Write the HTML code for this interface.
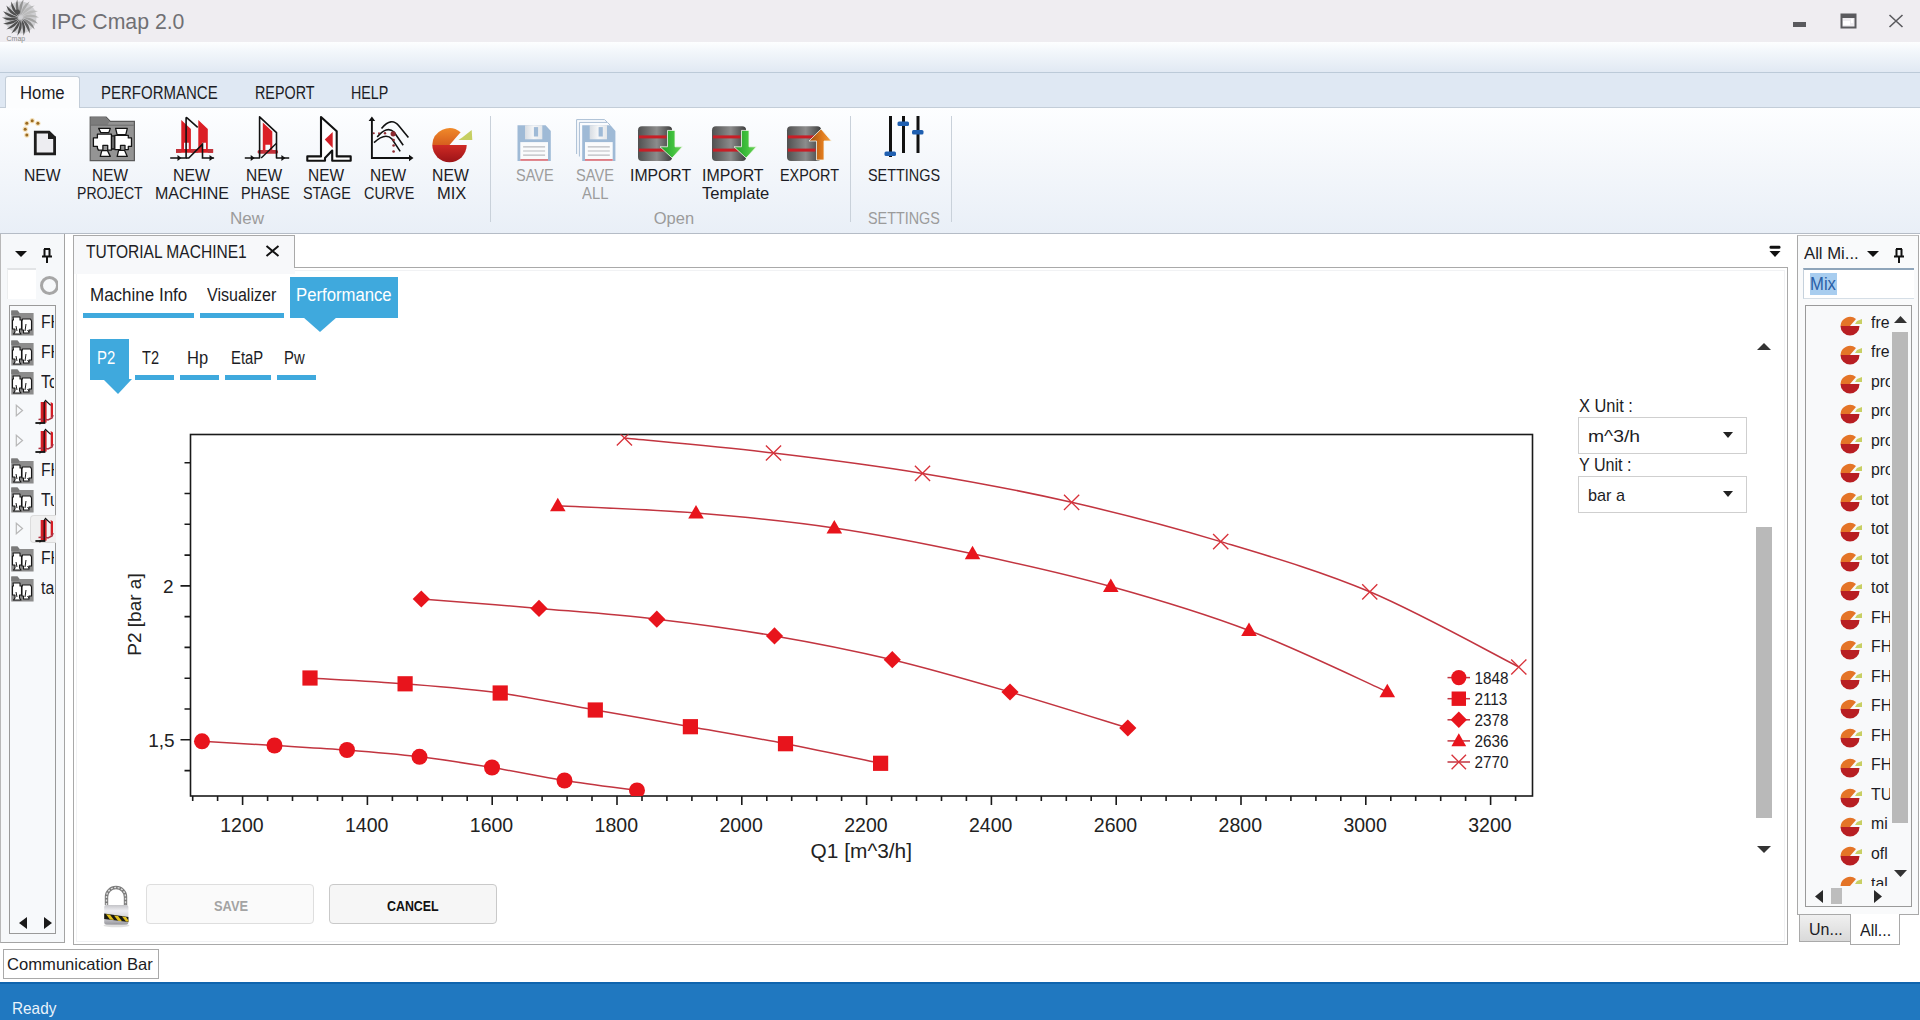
<!DOCTYPE html>
<html><head><meta charset="utf-8"><title>IPC Cmap 2.0</title>
<style>
*{box-sizing:border-box}
html,body{margin:0;padding:0}
body{width:1920px;height:1020px;position:relative;overflow:hidden;background:#fff;font-family:"Liberation Sans",sans-serif;color:#1f1f1f}
.a{position:absolute}
.t{position:absolute;white-space:nowrap;line-height:1;transform-origin:0 0}
#titlebar{left:0;top:0;width:1920px;height:42px;background:#efedf1}
#band{left:0;top:42px;width:1920px;height:31px;background:linear-gradient(#fdfeff 0%,#f3f7fb 30%,#e1e9f3 100%);border-bottom:1px solid #bccad8}
#tabstrip{left:0;top:73px;width:1920px;height:34px;background:#dfe8f3}
#hometab{left:5px;top:76px;width:75px;height:32px;background:#fcfdfe;border:1px solid #c3cdd8;border-bottom:none;border-radius:3px 3px 0 0}
#ribbon{left:0;top:107px;width:1920px;height:127px;background:linear-gradient(#fdfeff 0%,#f4f7fb 45%,#e9eff7 100%);border-top:1px solid #c3cdd8;border-bottom:1px solid #b5bcc6}
.rl{position:absolute;font-size:16px;line-height:18px;text-align:center;color:#1c1c24;white-space:nowrap;transform:scaleX(.92);transform-origin:50% 0}
.rl.dis{color:#9a9a9a}
.gl{position:absolute;font-size:16px;line-height:1;color:#9b9b9b;white-space:nowrap;transform:scaleX(.92);transform-origin:50% 0}
.sep{position:absolute;width:1px;background:#c9d1da}
#status{left:0;top:982px;width:1920px;height:38px;background:#2078c0;border-top:2px solid #0f64ae}
</style></head>
<body>
<div id="titlebar" class="a"></div>
<div id="band" class="a"></div>
<div id="tabstrip" class="a"></div>
<div id="ribbon" class="a"></div>
<div id="hometab" class="a"></div>
<svg class="a" style="left:0px;top:0px" width="44" height="44" viewBox="0 0 44 44">
<circle cx="20.5" cy="17.5" r="16" fill="#cfcfd2"/>
<path d="M22.5,17.5 Q32.4,16.0 37.9,23.8 Q31.8,21.4 22.5,17.5 Z" fill="#a1a1a1"/><path d="M22.4,18.2 Q32.2,20.2 34.7,29.4 Q29.8,25.1 22.4,18.2 Z" fill="#858585"/><path d="M22.0,18.8 Q30.6,24.0 29.8,33.5 Q26.7,27.8 22.0,18.8 Z" fill="#5d5d5d"/><path d="M21.5,19.2 Q27.7,27.1 23.7,35.7 Q22.8,29.3 21.5,19.2 Z" fill="#4e4e4e"/><path d="M20.8,19.5 Q24.0,29.0 17.3,35.7 Q18.6,29.4 20.8,19.5 Z" fill="#4e4e4e"/><path d="M20.2,19.5 Q19.9,29.5 11.3,33.5 Q14.7,28.0 20.2,19.5 Z" fill="#4e4e4e"/><path d="M19.5,19.2 Q15.8,28.5 6.3,29.4 Q11.4,25.4 19.5,19.2 Z" fill="#4e4e4e"/><path d="M19.0,18.8 Q12.3,26.3 3.1,23.8 Q9.3,21.8 19.0,18.8 Z" fill="#4e4e4e"/><path d="M18.6,18.2 Q9.8,22.9 2.0,17.5 Q8.5,17.7 18.6,18.2 Z" fill="#4e4e4e"/><path d="M18.5,17.5 Q8.6,19.0 3.1,11.2 Q9.2,13.6 18.5,17.5 Z" fill="#4e4e4e"/><path d="M18.6,16.8 Q8.8,14.8 6.3,5.6 Q11.2,9.9 18.6,16.8 Z" fill="#4e4e4e"/><path d="M19.0,16.2 Q10.4,11.0 11.2,1.5 Q14.3,7.2 19.0,16.2 Z" fill="#4e4e4e"/><path d="M19.5,15.8 Q13.3,7.9 17.3,-0.7 Q18.2,5.7 19.5,15.8 Z" fill="#737373"/><path d="M20.2,15.5 Q17.0,6.0 23.7,-0.7 Q22.4,5.6 20.2,15.5 Z" fill="#949494"/><path d="M20.8,15.5 Q21.1,5.5 29.7,1.5 Q26.3,7.0 20.8,15.5 Z" fill="#ababab"/><path d="M21.5,15.8 Q25.2,6.5 34.7,5.6 Q29.6,9.6 21.5,15.8 Z" fill="#b8b8b8"/><path d="M22.0,16.2 Q28.7,8.7 37.9,11.2 Q31.7,13.2 22.0,16.2 Z" fill="#bbbbbb"/><path d="M22.4,16.8 Q31.2,12.1 39.0,17.5 Q32.5,17.3 22.4,16.8 Z" fill="#b3b3b3"/>
<circle cx="17.5" cy="12" r="2.5" fill="#505050"/>
<text x="6.5" y="40.5" font-size="7" fill="#8a8a8a" font-family="Liberation Sans">Cmap</text>
</svg>
<div class="t" style="left:51.32px;top:10.84px;font-size:22px;color:#707074;transform:scaleX(0.9656)">IPC Cmap 2.0</div>
<div class="a" style="left:1793px;top:22px;width:13px;height:5px;background:#5a5a5e"></div>
<svg class="a" style="left:1840px;top:13px" width="17" height="16" viewBox="0 0 17 16">
<rect x="1.5" y="1.5" width="14" height="13" fill="none" stroke="#5a5a5e" stroke-width="2"/>
<rect x="1" y="1" width="15" height="4" fill="#5a5a5e"/>
<rect x="3" y="8" width="7" height="4" fill="#fff"/>
<rect x="11" y="6" width="2" height="4" fill="#fff"/>
</svg>
<svg class="a" style="left:1888px;top:14px" width="16" height="14" viewBox="0 0 16 14">
<path d="M1.5,1 L14.5,13 M14.5,1 L1.5,13" stroke="#5a5a5e" stroke-width="1.6"/>
</svg>
<div class="t" style="left:19.77px;top:84.24px;font-size:18px;color:#1c1c24;transform:scaleX(0.9297)">Home</div>
<div class="t" style="left:100.67px;top:84.24px;font-size:18px;color:#1c1c24;transform:scaleX(0.8331)">PERFORMANCE</div>
<div class="t" style="left:255.45px;top:84.24px;font-size:18px;color:#1c1c24;transform:scaleX(0.7973)">REPORT</div>
<div class="t" style="left:351.21px;top:84.24px;font-size:18px;color:#1c1c24;transform:scaleX(0.7932)">HELP</div>

<!-- NEW -->
<svg class="a" style="left:16px;top:112px" width="48" height="48" viewBox="0 0 48 48">
<g fill="#f3d9a6" opacity=".8"><circle cx="10.8" cy="11.3" r="2.6"/><circle cx="16.2" cy="8.7" r="2.6"/><circle cx="21.9" cy="11.3" r="2.6"/><circle cx="9.2" cy="17.2" r="2.6"/><circle cx="10.8" cy="23.1" r="2.6"/></g>
<g fill="#9a6a22"><circle cx="10.8" cy="11.3" r="1.5"/><circle cx="16.2" cy="8.7" r="1.5"/><circle cx="21.9" cy="11.3" r="1.5"/><circle cx="9.2" cy="17.2" r="1.5"/><circle cx="10.8" cy="23.1" r="1.5"/></g>
<path d="M19.3,20.2 L33,20.2 L38.6,25.6 L38.6,41.9 L19.3,41.9 Z" fill="#ededf1" stroke="#1e1e1e" stroke-width="2.8"/>
<path d="M32,19 L34,19 L34,22 L36.5,22 L36.5,24.5 L40,24.5 L40,27 L32,27 Z" fill="#1e1e1e"/>
</svg>
<!-- NEW PROJECT -->
<svg class="a" style="left:86px;top:112px" width="54" height="54" viewBox="0 0 54 54">
<path d="M4.2,5 L20.1,5 L24.3,9.3 L48.4,9.3 L48.4,48.7 L4.2,48.7 Z" fill="#949494" stroke="#5a5a5a" stroke-width="1.2"/>
<path d="M4.8,5.6 L19.8,5.6 L23.5,9.6 L21.5,13 L4.8,13 Z" fill="#7c7c7c"/>
<path d="M4.8,13.2 H47.8" stroke="#6a6a6a" stroke-width="1"/>
<g fill="#fff" stroke="#141414" stroke-width="1.3" stroke-linejoin="round">
<path d="M12.7,16.4 H24.3 L22.8,20.6 H14.8 Z"/>
<path d="M11.4,22.2 H25.4 V38.1 H21.7 V33.3 H16.9 V38.1 H12.4 L11.4,36 V34.4 H7.4 V25.9 H11.4 Z"/>
<path d="M15.8,38.6 H21.5 L24.3,44.4 H14.3 Z"/>
<path d="M26,23.8 H28 V37 H26 Z"/>
<path d="M29.6,16.4 H41.3 L39.8,22.6 H31.1 Z"/>
<path d="M28.8,23.3 H42.3 V25.9 H45.5 V34.4 H42.3 V37.6 H39 V33.3 H34.5 V37.6 H28.8 Z"/>
<path d="M32.6,38.4 H38.6 L41.3,44.4 H31.2 Z"/>
</g>
</svg>
<!-- NEW MACHINE -->
<svg class="a" style="left:166px;top:112px" width="54" height="54" viewBox="0 0 54 54">
<path d="M10,37 H15.3 V7.9 L24.9,16.9 V37 H32.3 V7.9 L41.8,16.9 V37 H47.1 V40.7 H10 Z" fill="#db1f26"/>
<path d="M15.3,37 V40.7 H10 V37 Z M41.8,37 H47.1 V40.7 H41.8 Z M24.9,37 H32.3 V40.7 H24.9 Z" fill="#c0323a"/>
<path d="M18,30.7 H22.8 V37 H18 Z M36,30.7 H40 V37 H36 Z" fill="#f5f7fb"/>
<path d="M4.2,46 H20.1 V6 Q20.1,5 21,5.8 L31.7,15.3" fill="none" stroke="#111" stroke-width="1.6"/>
<path d="M20.1,46 H22.8 L36.5,32.3 V46 H48.1" fill="none" stroke="#111" stroke-width="1.6"/>
<path d="M11.5,43 L15.5,46 L11.5,49 Z M43.5,43 L47.5,46 L43.5,49 Z" fill="#111"/>
</svg>
<!-- NEW PHASE -->
<svg class="a" style="left:240px;top:112px" width="54" height="54" viewBox="0 0 54 54">
<path d="M22.8,10.6 L32.3,19.6 V40.2 H30.2 V32.8 H25.4 V40.2 H22.8 Z" fill="#db1f26"/>
<rect x="17.5" y="38.1" width="20.6" height="3.7" rx="1.8" fill="#c2303a"/>
<path d="M4.8,46 H19.6 V4.8 L36.5,20.6 V46 H49.2" fill="none" stroke="#111" stroke-width="1.6" stroke-linejoin="round"/>
<path d="M21.2,46 L36.5,31.2" fill="none" stroke="#111" stroke-width="1.4"/>
<path d="M10.7,43 L14.7,46 L10.7,49 Z M41.4,43 L45.4,46 L41.4,49 Z" fill="#111"/>
</svg>
<!-- NEW STAGE -->
<svg class="a" style="left:302px;top:112px" width="54" height="54" viewBox="0 0 54 54">
<path d="M5.3,44.4 H19 V5 L34.7,19.3 V44.4 H48.7 V48.7 H30.2 V38.6 L23,46 V48.7 H5.3 Z" fill="#fff" stroke="#111" stroke-width="2.1" stroke-linejoin="round"/>
<path d="M30.7,20.1 L22.8,27.5 L30.7,36 Z" fill="#d31f27"/>
</svg>
<!-- NEW CURVE -->
<svg class="a" style="left:364px;top:112px" width="54" height="54" viewBox="0 0 54 54">
<path d="M7.9,7 V46 H46" fill="none" stroke="#111" stroke-width="1.9"/>
<path d="M4.6,9 L7.9,4.6 L11.2,9 Z M45,42.8 L49.5,46 L45,49.2 Z" fill="#111"/>
<path d="M17.5,16.4 Q27.5,4.5 35,14 L44.4,25.4" fill="none" stroke="#111" stroke-width="1.6"/>
<path d="M13.2,24.9 Q22.8,13.5 30,20 L39.2,33.3" fill="none" stroke="#111" stroke-width="1.6"/>
<path d="M10,30.7 Q21.2,20 28,27 L36.2,39.4" fill="none" stroke="#111" stroke-width="1.6"/>
<g fill="#8e2a30"><circle cx="9.8" cy="21.2" r="1"/><circle cx="15" cy="21.2" r="1"/><circle cx="21" cy="21.2" r="1.2"/><circle cx="29.2" cy="21.8" r="2.6"/><circle cx="29.6" cy="28" r="1.3"/><circle cx="29.6" cy="33.5" r="1.3"/><circle cx="29.6" cy="39.5" r="1.3"/></g>
</svg>
<!-- NEW MIX -->
<svg class="a" style="left:428px;top:112px" width="54" height="54" viewBox="0 0 54 54">
<defs><linearGradient id="mxo" x1="0" x2="0" y1="0" y2="1"><stop offset="0" stop-color="#f08a2a"/><stop offset="1" stop-color="#d75e1e"/></linearGradient>
<linearGradient id="mxr" x1="0" x2="0" y1="0" y2="1"><stop offset="0" stop-color="#cf2a24"/><stop offset="1" stop-color="#9c1418"/></linearGradient></defs>
<path d="M21.5,33 L32.6,20.2 A17.2,17.2 0 0 0 4.3,33 Z" fill="url(#mxo)"/>
<path d="M4.3,33 A17.2,17.2 0 0 0 38.7,33 Z" fill="url(#mxr)"/>
<path d="M34.2,25.4 L43.7,18 L44.3,28 L30.4,28 Z" fill="#c6cf62"/>
</svg>
<!-- separators -->
<div class="sep" style="left:490px;top:116px;height:106px"></div>
<div class="sep" style="left:850px;top:116px;height:106px"></div>
<div class="sep" style="left:951px;top:116px;height:106px"></div>
<!-- SAVE -->
<svg class="a" style="left:510px;top:114px" width="46" height="50" viewBox="0 0 46 50">
<defs><linearGradient id="shut" x1="0" x2="1"><stop offset="0" stop-color="#d8dde3"/><stop offset=".5" stop-color="#f6f7f8"/><stop offset="1" stop-color="#e4e7ea"/></linearGradient></defs>
<path d="M7.5,11.2 H35.6 L40.8,16.9 V46.9 H7.5 Z" fill="#9fbad6"/>
<rect x="15" y="11.2" width="17.3" height="14.1" fill="url(#shut)"/>
<rect x="23.9" y="13.1" width="4.2" height="9.4" fill="#9fbad6"/>
<rect x="10.3" y="28.1" width="27.7" height="18.8" fill="#fafbfc"/>
<path d="M13.1,32.8 H35.1 M13.1,37 H35.1 M13.1,41.2 H35.1" stroke="#b9bcc0" stroke-width="1.2"/>
<rect x="10.3" y="45" width="27.7" height="1.9" fill="#de7d84"/>
</svg>
<!-- SAVE ALL -->
<svg class="a" style="left:576px;top:114px" width="116" height="50" viewBox="66 0 116 50">
<path d="M66.6,40 V5.6 H94.5 L97,8" fill="none" stroke="#a9bed4" stroke-width="1"/>
<path d="M69.4,42.5 V8.4 H97.5 L100,11" fill="none" stroke="#a9bed4" stroke-width="1"/>
<path d="M72.2,11.2 H100.5 L105.4,16.9 V46.9 H72.2 Z" fill="#9fbad6"/>
<rect x="79.7" y="11.2" width="17.3" height="14.1" fill="url(#shut)"/>
<rect x="88.6" y="13.1" width="4.2" height="9.4" fill="#9fbad6"/>
<rect x="75" y="28.1" width="27.7" height="18.8" fill="#fafbfc"/>
<path d="M77.8,32.8 H99.8 M77.8,37 H99.8 M77.8,41.2 H99.8" stroke="#b9bcc0" stroke-width="1.2"/>
<rect x="75" y="45" width="27.7" height="1.9" fill="#de7d84"/>
</svg>
<!-- IMPORT -->
<svg class="a" style="left:510px;top:114px" width="50" height="50" viewBox="0 0 50 50" overflow="visible">
<defs><linearGradient id="db" x1="0" x2="1" y1="0" y2="0"><stop offset="0" stop-color="#505050"/><stop offset=".55" stop-color="#8c8c8c"/><stop offset="1" stop-color="#3e3e3e"/></linearGradient>
<linearGradient id="ga" x1="0" x2="1"><stop offset="0" stop-color="#1f9a2a"/><stop offset=".6" stop-color="#42c23e"/><stop offset="1" stop-color="#6fd35a"/></linearGradient>
<linearGradient id="oa" x1="0" x2="1"><stop offset="0" stop-color="#9a4a0c"/><stop offset=".6" stop-color="#e07b1e"/><stop offset="1" stop-color="#f5a040"/></linearGradient>
<g id="dbk"><rect x="128" y="12.2" width="34.1" height="34.7" rx="4" fill="url(#db)"/>
<rect x="128.9" y="21.4" width="27.6" height="3" fill="#c81e26"/><rect x="128.9" y="34.6" width="27.6" height="3" fill="#c81e26"/></g></defs>
<use href="#dbk"/>
<path d="M157.5,16.4 H165 V32.8 H172.4 L162.1,44 L150,32.8 H157.5 Z" fill="url(#ga)" stroke="#f4f8f0" stroke-width=".8"/>
<use href="#dbk" transform="translate(74,0)"/>
<path d="M231.5,16.4 H239 V32.8 H246.4 L236.1,44 L224,32.8 H231.5 Z" fill="url(#ga)" stroke="#f4f8f0" stroke-width=".8"/>
<use href="#dbk" transform="translate(149,0)"/>
<path d="M306.5,46 H314 V27 H321.4 L311.1,15 L299,27 H306.5 Z" fill="url(#oa)" stroke="#f4f8f0" stroke-width=".8"/>
</svg>
<!-- SETTINGS -->
<svg class="a" style="left:880px;top:112px" width="50" height="50" viewBox="0 0 50 50">
<path d="M10.5,4 V45 M23.5,4 V41 M38,4 V41" stroke="#111" stroke-width="3"/>
<rect x="4.5" y="39.5" width="11.5" height="4.5" rx="1.5" fill="#1f5fb0"/><rect x="17.5" y="9.5" width="11.5" height="4.5" rx="1.5" fill="#1f5fb0"/><rect x="32" y="18" width="11.5" height="4.5" rx="1.5" fill="#1f5fb0"/>
</svg>
<!-- labels -->
<div class="t" style="left:23.78px;top:166.58px;font-size:17px;color:#1c1c24;transform:scaleX(0.9245)">NEW</div><div class="t" style="left:91.69px;top:166.58px;font-size:17px;color:#1c1c24;transform:scaleX(0.9064)">NEW</div><div class="t" style="left:77.37px;top:184.58px;font-size:17px;color:#1c1c24;transform:scaleX(0.8274)">PROJECT</div><div class="t" style="left:172.57px;top:166.58px;font-size:17px;color:#1c1c24;transform:scaleX(0.9323)">NEW</div><div class="t" style="left:154.76px;top:184.58px;font-size:17px;color:#1c1c24;transform:scaleX(0.9435)">MACHINE</div><div class="t" style="left:245.79px;top:166.58px;font-size:17px;color:#1c1c24;transform:scaleX(0.9141)">NEW</div><div class="t" style="left:240.65px;top:184.58px;font-size:17px;color:#1c1c24;transform:scaleX(0.8473)">PHASE</div><div class="t" style="left:307.89px;top:166.58px;font-size:17px;color:#1c1c24;transform:scaleX(0.9115)">NEW</div><div class="t" style="left:302.9px;top:184.58px;font-size:17px;color:#1c1c24;transform:scaleX(0.8479)">STAGE</div><div class="t" style="left:369.69px;top:166.58px;font-size:17px;color:#1c1c24;transform:scaleX(0.9115)">NEW</div><div class="t" style="left:364.1px;top:184.58px;font-size:17px;color:#1c1c24;transform:scaleX(0.8511)">CURVE</div><div class="t" style="left:431.57px;top:166.58px;font-size:17px;color:#1c1c24;transform:scaleX(0.9271)">NEW</div><div class="t" style="left:437.33px;top:184.58px;font-size:17px;color:#1c1c24;transform:scaleX(0.9694)">MIX</div>
<div class="t" style="left:515.5px;top:166.58px;font-size:17px;color:#9c9c9c;transform:scaleX(0.8548)">SAVE</div><div class="t" style="left:575.6px;top:166.58px;font-size:17px;color:#9c9c9c;transform:scaleX(0.8593)">SAVE</div><div class="t" style="left:582.2px;top:184.58px;font-size:17px;color:#9c9c9c;transform:scaleX(0.8727)">ALL</div><div class="t" style="left:629.97px;top:166.58px;font-size:17px;color:#1c1c24;transform:scaleX(0.9283)">IMPORT</div><div class="t" style="left:701.76px;top:166.58px;font-size:17px;color:#1c1c24;transform:scaleX(0.9361)">IMPORT</div><div class="t" style="left:701.6px;top:184.78px;font-size:17px;color:#1c1c24;transform:scaleX(0.9748)">Template</div><div class="t" style="left:780.15px;top:166.58px;font-size:17px;color:#1c1c24;transform:scaleX(0.8474)">EXPORT</div><div class="t" style="left:867.9px;top:166.58px;font-size:17px;color:#1c1c24;transform:scaleX(0.848)">SETTINGS</div>
<div class="t" style="left:229.77px;top:210.21px;font-size:16.5px;color:#9b9b9b;transform:scaleX(1.0345)">New</div><div class="t" style="left:653.75px;top:210.21px;font-size:16.5px;color:#9b9b9b">Open</div><div class="t" style="left:867.9px;top:210.21px;font-size:16.5px;color:#9b9b9b;transform:scaleX(0.8703)">SETTINGS</div>

<!-- LEFT PANEL -->
<div class="a" style="left:0;top:234px;width:65px;height:709px;background:#f6f8fa;border:1px solid #a4a4a4;border-top:none;border-left:1px solid #b8b8b8"></div>
<svg class="a" style="left:14px;top:250px" width="14" height="8" viewBox="0 0 14 8"><path d="M1,1 L13,1 L7,7 Z" fill="#111"/></svg>
<svg class="a" style="left:41px;top:248px" width="12" height="16" viewBox="0 0 12 16"><path d="M3,1 H9 M3.5,1 V8 M8.5,1 V8 M1,8.5 H11 M6,9 V15" stroke="#111" stroke-width="2" fill="none"/></svg>
<div class="a" style="left:7px;top:268px;width:29px;height:31px;background:#fff;border-top:2px solid #e2e4e6;border-left:1px solid #eceeef"></div>
<div class="a" style="left:38px;top:273px;width:20px;height:24px;overflow:hidden"><div class="a" style="left:1.5px;top:2.5px;width:19px;height:19px;border-radius:50%;border:3.5px solid #a6a6a6"></div></div>
<div class="a" style="left:9px;top:305px;width:47px;height:629px;border:1px solid #9a9a9a;background:#f7f9fb"></div>
<svg class="a" style="left:10px;top:310px" width="24" height="26" viewBox="0 0 24 26">
<path d="M1.3,0.6 H7.5 L9.5,3 H23.6 V25.6 H1.3 Z" fill="#8c8c8c"/><path d="M1.3,0.6 H7.5 L9.5,3 L8.5,5 H1.3 Z" fill="#7a7a7a"/>
<g fill="#fff" stroke="#161616" stroke-width="1.1" stroke-linejoin="round">
<path d="M3,7 H10 V10 H11.5 V19 H9.5 V22 L11,24 H3.5 L5,22 V19 H2.5 V10 H3.5 Z"/>
<path d="M12.5,9 H20.5 L21.5,11 V20 H19 V23 H13.5 V20 H12 V11 Z"/>
</g>
<path d="M6,16 L7,21 M16,14 L15,21 M17.5,20 L19,22" stroke="#161616" stroke-width="1"/>
</svg>
<div class="a" style="left:40px;top:312px;width:13.5px;height:20px;overflow:hidden"><div class="t" style="left:0.6px;top:1.7px;font-size:17.5px;color:#1c1c24;transform:scaleX(.9)">FH</div></div>
<svg class="a" style="left:10px;top:340px" width="24" height="26" viewBox="0 0 24 26">
<path d="M1.3,0.6 H7.5 L9.5,3 H23.6 V25.6 H1.3 Z" fill="#8c8c8c"/><path d="M1.3,0.6 H7.5 L9.5,3 L8.5,5 H1.3 Z" fill="#7a7a7a"/>
<g fill="#fff" stroke="#161616" stroke-width="1.1" stroke-linejoin="round">
<path d="M3,7 H10 V10 H11.5 V19 H9.5 V22 L11,24 H3.5 L5,22 V19 H2.5 V10 H3.5 Z"/>
<path d="M12.5,9 H20.5 L21.5,11 V20 H19 V23 H13.5 V20 H12 V11 Z"/>
</g>
<path d="M6,16 L7,21 M16,14 L15,21 M17.5,20 L19,22" stroke="#161616" stroke-width="1"/>
</svg>
<div class="a" style="left:40px;top:342px;width:13.5px;height:20px;overflow:hidden"><div class="t" style="left:0.6px;top:1.7px;font-size:17.5px;color:#1c1c24;transform:scaleX(.9)">FH</div></div>
<svg class="a" style="left:10px;top:369px" width="24" height="26" viewBox="0 0 24 26">
<path d="M1.3,0.6 H7.5 L9.5,3 H23.6 V25.6 H1.3 Z" fill="#8c8c8c"/><path d="M1.3,0.6 H7.5 L9.5,3 L8.5,5 H1.3 Z" fill="#7a7a7a"/>
<g fill="#fff" stroke="#161616" stroke-width="1.1" stroke-linejoin="round">
<path d="M3,7 H10 V10 H11.5 V19 H9.5 V22 L11,24 H3.5 L5,22 V19 H2.5 V10 H3.5 Z"/>
<path d="M12.5,9 H20.5 L21.5,11 V20 H19 V23 H13.5 V20 H12 V11 Z"/>
</g>
<path d="M6,16 L7,21 M16,14 L15,21 M17.5,20 L19,22" stroke="#161616" stroke-width="1"/>
</svg>
<div class="a" style="left:40px;top:372px;width:13.5px;height:20px;overflow:hidden"><div class="t" style="left:0.6px;top:1.7px;font-size:17.5px;color:#1c1c24;transform:scaleX(.9)">Tc</div></div>
<svg class="a" style="left:15px;top:404px" width="9" height="13" viewBox="0 0 9 13"><path d="M1.3,1.2 L7.5,6.5 L1.3,11.8 Z" fill="none" stroke="#b8b8b8" stroke-width="1.2"/></svg>
<svg class="a" style="left:35px;top:399px" width="24" height="26" viewBox="0 0 24 26">
<path d="M5.7,3 H11.6 V23.6 H5.7 Z" fill="#d41d25"/><path d="M15.7,3 L18,4.5 V17 L15.7,19 Z" fill="#d41d25"/>
<path d="M3.5,20.5 L9,20 L13,21 L17,19 L18,16" fill="none" stroke="#b03040" stroke-width="1.6"/>
<path d="M9.2,24 V3.4 L10.5,1.5 L15.7,6.4" fill="none" stroke="#111" stroke-width="1.2"/>
<path d="M0.4,24 H10.4" stroke="#111" stroke-width="1.8"/><path d="M4.6,23 L6.6,24 L4.6,26 Z" fill="#111"/>
</svg>
<svg class="a" style="left:15px;top:434px" width="9" height="13" viewBox="0 0 9 13"><path d="M1.3,1.2 L7.5,6.5 L1.3,11.8 Z" fill="none" stroke="#b8b8b8" stroke-width="1.2"/></svg>
<svg class="a" style="left:35px;top:428px" width="24" height="26" viewBox="0 0 24 26">
<path d="M5.7,3 H11.6 V23.6 H5.7 Z" fill="#d41d25"/><path d="M15.7,3 L18,4.5 V17 L15.7,19 Z" fill="#d41d25"/>
<path d="M3.5,20.5 L9,20 L13,21 L17,19 L18,16" fill="none" stroke="#b03040" stroke-width="1.6"/>
<path d="M9.2,24 V3.4 L10.5,1.5 L15.7,6.4" fill="none" stroke="#111" stroke-width="1.2"/>
<path d="M0.4,24 H10.4" stroke="#111" stroke-width="1.8"/><path d="M4.6,23 L6.6,24 L4.6,26 Z" fill="#111"/>
</svg>
<svg class="a" style="left:10px;top:458px" width="24" height="26" viewBox="0 0 24 26">
<path d="M1.3,0.6 H7.5 L9.5,3 H23.6 V25.6 H1.3 Z" fill="#8c8c8c"/><path d="M1.3,0.6 H7.5 L9.5,3 L8.5,5 H1.3 Z" fill="#7a7a7a"/>
<g fill="#fff" stroke="#161616" stroke-width="1.1" stroke-linejoin="round">
<path d="M3,7 H10 V10 H11.5 V19 H9.5 V22 L11,24 H3.5 L5,22 V19 H2.5 V10 H3.5 Z"/>
<path d="M12.5,9 H20.5 L21.5,11 V20 H19 V23 H13.5 V20 H12 V11 Z"/>
</g>
<path d="M6,16 L7,21 M16,14 L15,21 M17.5,20 L19,22" stroke="#161616" stroke-width="1"/>
</svg>
<div class="a" style="left:40px;top:460px;width:13.5px;height:20px;overflow:hidden"><div class="t" style="left:0.6px;top:1.7px;font-size:17.5px;color:#1c1c24;transform:scaleX(.9)">FH</div></div>
<svg class="a" style="left:10px;top:487px" width="24" height="26" viewBox="0 0 24 26">
<path d="M1.3,0.6 H7.5 L9.5,3 H23.6 V25.6 H1.3 Z" fill="#8c8c8c"/><path d="M1.3,0.6 H7.5 L9.5,3 L8.5,5 H1.3 Z" fill="#7a7a7a"/>
<g fill="#fff" stroke="#161616" stroke-width="1.1" stroke-linejoin="round">
<path d="M3,7 H10 V10 H11.5 V19 H9.5 V22 L11,24 H3.5 L5,22 V19 H2.5 V10 H3.5 Z"/>
<path d="M12.5,9 H20.5 L21.5,11 V20 H19 V23 H13.5 V20 H12 V11 Z"/>
</g>
<path d="M6,16 L7,21 M16,14 L15,21 M17.5,20 L19,22" stroke="#161616" stroke-width="1"/>
</svg>
<div class="a" style="left:40px;top:490px;width:13.5px;height:20px;overflow:hidden"><div class="t" style="left:0.6px;top:1.7px;font-size:17.5px;color:#1c1c24;transform:scaleX(.9)">Tu</div></div>
<div class="a" style="left:30px;top:515px;width:26px;height:28px;border:1px solid #dcdcdc;border-right:none;border-radius:4px 0 0 4px;background:#f0f0f0"></div>
<svg class="a" style="left:15px;top:522px" width="9" height="13" viewBox="0 0 9 13"><path d="M1.3,1.2 L7.5,6.5 L1.3,11.8 Z" fill="none" stroke="#b8b8b8" stroke-width="1.2"/></svg>
<svg class="a" style="left:35px;top:517px" width="24" height="26" viewBox="0 0 24 26">
<path d="M5.7,3 H11.6 V23.6 H5.7 Z" fill="#d41d25"/><path d="M15.7,3 L18,4.5 V17 L15.7,19 Z" fill="#d41d25"/>
<path d="M3.5,20.5 L9,20 L13,21 L17,19 L18,16" fill="none" stroke="#b03040" stroke-width="1.6"/>
<path d="M9.2,24 V3.4 L10.5,1.5 L15.7,6.4" fill="none" stroke="#111" stroke-width="1.2"/>
<path d="M0.4,24 H10.4" stroke="#111" stroke-width="1.8"/><path d="M4.6,23 L6.6,24 L4.6,26 Z" fill="#111"/>
</svg>
<svg class="a" style="left:10px;top:546px" width="24" height="26" viewBox="0 0 24 26">
<path d="M1.3,0.6 H7.5 L9.5,3 H23.6 V25.6 H1.3 Z" fill="#8c8c8c"/><path d="M1.3,0.6 H7.5 L9.5,3 L8.5,5 H1.3 Z" fill="#7a7a7a"/>
<g fill="#fff" stroke="#161616" stroke-width="1.1" stroke-linejoin="round">
<path d="M3,7 H10 V10 H11.5 V19 H9.5 V22 L11,24 H3.5 L5,22 V19 H2.5 V10 H3.5 Z"/>
<path d="M12.5,9 H20.5 L21.5,11 V20 H19 V23 H13.5 V20 H12 V11 Z"/>
</g>
<path d="M6,16 L7,21 M16,14 L15,21 M17.5,20 L19,22" stroke="#161616" stroke-width="1"/>
</svg>
<div class="a" style="left:40px;top:548px;width:13.5px;height:20px;overflow:hidden"><div class="t" style="left:0.6px;top:1.7px;font-size:17.5px;color:#1c1c24;transform:scaleX(.9)">FH</div></div>
<svg class="a" style="left:10px;top:576px" width="24" height="26" viewBox="0 0 24 26">
<path d="M1.3,0.6 H7.5 L9.5,3 H23.6 V25.6 H1.3 Z" fill="#8c8c8c"/><path d="M1.3,0.6 H7.5 L9.5,3 L8.5,5 H1.3 Z" fill="#7a7a7a"/>
<g fill="#fff" stroke="#161616" stroke-width="1.1" stroke-linejoin="round">
<path d="M3,7 H10 V10 H11.5 V19 H9.5 V22 L11,24 H3.5 L5,22 V19 H2.5 V10 H3.5 Z"/>
<path d="M12.5,9 H20.5 L21.5,11 V20 H19 V23 H13.5 V20 H12 V11 Z"/>
</g>
<path d="M6,16 L7,21 M16,14 L15,21 M17.5,20 L19,22" stroke="#161616" stroke-width="1"/>
</svg>
<div class="a" style="left:40px;top:578px;width:13.5px;height:20px;overflow:hidden"><div class="t" style="left:0.6px;top:1.7px;font-size:17.5px;color:#1c1c24;transform:scaleX(.9)">ta</div></div>
<svg class="a" style="left:16px;top:915px" width="40" height="16" viewBox="0 0 40 16"><path d="M11,2 L3,8 L11,14 Z M28,2 L36,8 L28,14 Z" fill="#1a1a1a"/></svg>

<!-- DOC PANEL -->
<div class="a" style="left:73px;top:267px;width:1715px;height:678px;background:#fff;border:1px solid #a9a9a9"></div>
<div class="a" style="left:76px;top:270px;width:1709px;height:672px;border:1px solid #f1f2f4"></div>
<div class="a" style="left:73px;top:235px;width:222px;height:33px;background:#f7f8fa;border:1px solid #a9a9a9;border-bottom:none"></div>
<div class="a" style="left:74px;top:268px;width:221px;height:6px;background:#f7f8fa"></div>
<div class="t" style="left:86.3px;top:243.24px;font-size:18px;color:#1c1c24;transform:scaleX(0.864)">TUTORIAL MACHINE1</div>
<svg class="a" style="left:265px;top:245px" width="15" height="12" viewBox="0 0 15 12"><path d="M1.5,1 L13.5,11 M13.5,1 L1.5,11" stroke="#111" stroke-width="2"/></svg>
<svg class="a" style="left:1768px;top:245px" width="14" height="13" viewBox="0 0 14 13"><rect x="1.5" y="0.8" width="11" height="3" rx="1.4" fill="#111"/><path d="M1.5,6 L12.5,6 L7,12 Z" fill="#111"/></svg>

<!-- tabs -->
<div class="t" style="left:90.03px;top:287.06px;font-size:17.5px;color:#1c1c24;transform:scaleX(0.9709)">Machine Info</div>
<div class="a" style="left:83px;top:313px;width:111px;height:5px;background:#3fa9dd"></div>
<div class="t" style="left:207.3px;top:287.06px;font-size:17.5px;color:#1c1c24;transform:scaleX(0.9166)">Visualizer</div>
<div class="a" style="left:200px;top:313px;width:84px;height:5px;background:#3fa9dd"></div>
<div class="a" style="left:290px;top:277px;width:108px;height:41px;background:#3fa9dd"></div>
<svg class="a" style="left:303px;top:317px" width="34" height="16" viewBox="0 0 34 16"><path d="M0,0 L34,0 L17,15 Z" fill="#3fa9dd"/></svg>
<div class="t" style="left:296.05px;top:287.06px;font-size:17.5px;color:#fff;transform:scaleX(0.9548)">Performance</div>

<div class="a" style="left:90px;top:339px;width:39px;height:41px;background:#3fa9dd"></div>
<svg class="a" style="left:103px;top:379px" width="29" height="16" viewBox="0 0 29 16"><path d="M0,0 L29,0 L15,15 Z" fill="#3fa9dd"/></svg>
<div class="t" style="left:96.77px;top:348.64px;font-size:18px;color:#fff;transform:scaleX(0.8283)">P2</div>
<div class="t" style="left:142.0px;top:348.64px;font-size:18px;color:#1c1c24;transform:scaleX(0.8097)">T2</div>
<div class="a" style="left:135px;top:375px;width:39px;height:5px;background:#3fa9dd"></div>
<div class="t" style="left:186.88px;top:348.64px;font-size:18px;color:#1c1c24;transform:scaleX(0.9182)">Hp</div>
<div class="a" style="left:180px;top:375px;width:39px;height:5px;background:#3fa9dd"></div>
<div class="t" style="left:231.48px;top:348.64px;font-size:18px;color:#1c1c24;transform:scaleX(0.8233)">EtaP</div>
<div class="a" style="left:225px;top:375px;width:46px;height:5px;background:#3fa9dd"></div>
<div class="t" style="left:283.58px;top:348.64px;font-size:18px;color:#1c1c24;transform:scaleX(0.8238)">Pw</div>
<div class="a" style="left:277px;top:375px;width:39px;height:5px;background:#3fa9dd"></div>

<!-- right controls in doc -->
<svg class="a" style="left:1756px;top:342px" width="16" height="9" viewBox="0 0 16 9"><path d="M1,8 L15,8 L8,1 Z" fill="#333"/></svg>
<svg class="a" style="left:1756px;top:845px" width="16" height="9" viewBox="0 0 16 9"><path d="M1,1 L15,1 L8,8 Z" fill="#333"/></svg>
<div class="a" style="left:1756px;top:527px;width:16px;height:291px;background:#b9b9b9"></div>
<div class="t" style="left:1579.0px;top:397.76px;font-size:17.5px;color:#1c1c24;transform:scaleX(0.9378)">X Unit :</div>
<div class="a" style="left:1578px;top:417px;width:169px;height:37px;background:#fff;border:1px solid #cfcfcf"></div>
<div class="t" style="left:1587.66px;top:427.98px;font-size:17px;color:#1c1c24;transform:scaleX(1.1373)">m^3/h</div>
<svg class="a" style="left:1722px;top:431px" width="12" height="9" viewBox="0 0 12 9"><path d="M1,1 L11,1 L6,7 Z" fill="#222"/></svg>
<div class="t" style="left:1579.0px;top:457.06px;font-size:17.5px;color:#1c1c24;transform:scaleX(0.9201)">Y Unit :</div>
<div class="a" style="left:1578px;top:476px;width:169px;height:37px;background:#fff;border:1px solid #cfcfcf"></div>
<div class="t" style="left:1587.84px;top:486.58px;font-size:17px;color:#1c1c24;transform:scaleX(0.9558)">bar a</div>
<svg class="a" style="left:1722px;top:490px" width="12" height="9" viewBox="0 0 12 9"><path d="M1,1 L11,1 L6,7 Z" fill="#222"/></svg>

<!-- lock + buttons -->
<svg class="a" style="left:96px;top:880px" width="40" height="52" viewBox="0 0 40 52">
<defs><linearGradient id="lk" x1="0" x2="0" y1="0" y2="1"><stop offset="0" stop-color="#c4c4c8"/><stop offset=".3" stop-color="#eeeef2"/><stop offset=".6" stop-color="#d6d6da"/><stop offset="1" stop-color="#9a9aa0"/></linearGradient>
<linearGradient id="lkh" x1="0" x2="1"><stop offset="0" stop-color="#8a8a8a"/><stop offset=".5" stop-color="#f4f4f4"/><stop offset="1" stop-color="#8a8a8a"/></linearGradient></defs>
<path d="M10.5,25 V17 A9.5,9.5 0 0 1 29.5,17 V25" fill="none" stroke="#7a7a7a" stroke-width="3.4"/>
<path d="M10.5,25 V17 A9.5,9.5 0 0 1 29.5,17 V25" fill="none" stroke="#dcdcdc" stroke-width="1.4" stroke-dasharray="2 1.5"/>
<rect x="8.2" y="25" width="24.2" height="19.4" rx="2" fill="url(#lk)"/>
<path d="M8.2,33.5 L32.4,37 L32.4,42 L8.2,39 Z" fill="#1a1a12"/>
<path d="M10,34.2 L14,34.8 L18,40 L14,39.6 Z M18,35.4 L22,36 L26,41.2 L22,40.8 Z M26,36.5 L30,37.1 L32.4,40.5 L32.4,41.5 L30,41.5 Z" fill="#e2c01e"/>
<ellipse cx="20.5" cy="45.5" rx="13" ry="1.8" fill="#000" opacity=".13"/>
</svg>
<div class="a" style="left:146px;top:884px;width:168px;height:40px;background:#fafafa;border:1px solid #dedede;border-radius:4px"></div>
<div class="t" style="left:214.2px;top:898.73px;font-size:14px;color:#a3a3a3;font-weight:bold;transform:scaleX(0.9171)">SAVE</div>
<div class="a" style="left:329px;top:884px;width:168px;height:40px;background:#f6f6f6;border:1px solid #c9c9c9;border-radius:4px"></div>
<div class="t" style="left:387.2px;top:898.73px;font-size:14px;color:#111;font-weight:bold;transform:scaleX(0.8847)">CANCEL</div>

<!-- RIGHT PANEL -->
<div class="a" style="left:1797px;top:235px;width:122px;height:680px;background:#f9fafb;border:1px solid #a9a9a9;border-top:1px solid #c0c0c0"></div>
<div class="t" style="left:1804.0px;top:245.28px;font-size:17px;color:#1c1c24;transform:scaleX(0.9818)">All Mi...</div>
<svg class="a" style="left:1866px;top:250px" width="14" height="8" viewBox="0 0 14 8"><path d="M1,1 L13,1 L7,7 Z" fill="#111"/></svg>
<svg class="a" style="left:1893px;top:248px" width="12" height="16" viewBox="0 0 12 16"><path d="M3,1 H9 M3.5,1 V8 M8.5,1 V8 M1,8.5 H11 M6,9 V15" stroke="#111" stroke-width="2" fill="none"/></svg>
<div class="a" style="left:1803px;top:268px;width:111px;height:31px;background:#fff;border-top:2px solid #8fa5ba;border-left:1px solid #c5d1dc;border-bottom:1px solid #d5dee6"></div>
<div class="a" style="left:1810px;top:273px;width:27px;height:22px;background:#a8cdef"></div>
<div class="t" style="left:1810.4px;top:274.91px;font-size:18.5px;color:#2a5fa6;transform:scaleX(0.9011)">Mix</div>
<div class="a" style="left:1805px;top:305px;width:107px;height:602px;background:#f8f9fa;border:1px solid #9a9a9a"></div>
<svg class="a" style="left:1839px;top:316px" width="24" height="21" viewBox="0 0 24 21">
<path d="M11,10 L17,3 A9.5,9.5 0 0 0 1.5,10 Z" fill="#e47427"/><path d="M1.5,10 A9.5,9.5 0 0 0 20.5,10 Z" fill="#b81e22"/><path d="M18,5 L23,3 L23,8 L16,8 Z" fill="#c8cf63"/></svg>
<div class="a" style="left:1871px;top:312px;width:18.5px;height:22px;overflow:hidden"><div class="t" style="left:0;top:1.9px;font-size:17px;color:#1c1c24;transform:scaleX(.93)">fre</div></div>
<svg class="a" style="left:1839px;top:345px" width="24" height="21" viewBox="0 0 24 21">
<path d="M11,10 L17,3 A9.5,9.5 0 0 0 1.5,10 Z" fill="#e47427"/><path d="M1.5,10 A9.5,9.5 0 0 0 20.5,10 Z" fill="#b81e22"/><path d="M18,5 L23,3 L23,8 L16,8 Z" fill="#c8cf63"/></svg>
<div class="a" style="left:1871px;top:342px;width:18.5px;height:22px;overflow:hidden"><div class="t" style="left:0;top:1.4px;font-size:17px;color:#1c1c24;transform:scaleX(.93)">fre</div></div>
<svg class="a" style="left:1839px;top:374px" width="24" height="21" viewBox="0 0 24 21">
<path d="M11,10 L17,3 A9.5,9.5 0 0 0 1.5,10 Z" fill="#e47427"/><path d="M1.5,10 A9.5,9.5 0 0 0 20.5,10 Z" fill="#b81e22"/><path d="M18,5 L23,3 L23,8 L16,8 Z" fill="#c8cf63"/></svg>
<div class="a" style="left:1871px;top:372px;width:18.5px;height:22px;overflow:hidden"><div class="t" style="left:0;top:0.9px;font-size:17px;color:#1c1c24;transform:scaleX(.93)">pro</div></div>
<svg class="a" style="left:1839px;top:404px" width="24" height="21" viewBox="0 0 24 21">
<path d="M11,10 L17,3 A9.5,9.5 0 0 0 1.5,10 Z" fill="#e47427"/><path d="M1.5,10 A9.5,9.5 0 0 0 20.5,10 Z" fill="#b81e22"/><path d="M18,5 L23,3 L23,8 L16,8 Z" fill="#c8cf63"/></svg>
<div class="a" style="left:1871px;top:401px;width:18.5px;height:22px;overflow:hidden"><div class="t" style="left:0;top:1.4px;font-size:17px;color:#1c1c24;transform:scaleX(.93)">pro</div></div>
<svg class="a" style="left:1839px;top:434px" width="24" height="21" viewBox="0 0 24 21">
<path d="M11,10 L17,3 A9.5,9.5 0 0 0 1.5,10 Z" fill="#e47427"/><path d="M1.5,10 A9.5,9.5 0 0 0 20.5,10 Z" fill="#b81e22"/><path d="M18,5 L23,3 L23,8 L16,8 Z" fill="#c8cf63"/></svg>
<div class="a" style="left:1871px;top:430px;width:18.5px;height:22px;overflow:hidden"><div class="t" style="left:0;top:1.9px;font-size:17px;color:#1c1c24;transform:scaleX(.93)">pro</div></div>
<svg class="a" style="left:1839px;top:463px" width="24" height="21" viewBox="0 0 24 21">
<path d="M11,10 L17,3 A9.5,9.5 0 0 0 1.5,10 Z" fill="#e47427"/><path d="M1.5,10 A9.5,9.5 0 0 0 20.5,10 Z" fill="#b81e22"/><path d="M18,5 L23,3 L23,8 L16,8 Z" fill="#c8cf63"/></svg>
<div class="a" style="left:1871px;top:460px;width:18.5px;height:22px;overflow:hidden"><div class="t" style="left:0;top:1.4px;font-size:17px;color:#1c1c24;transform:scaleX(.93)">pro</div></div>
<svg class="a" style="left:1839px;top:492px" width="24" height="21" viewBox="0 0 24 21">
<path d="M11,10 L17,3 A9.5,9.5 0 0 0 1.5,10 Z" fill="#e47427"/><path d="M1.5,10 A9.5,9.5 0 0 0 20.5,10 Z" fill="#b81e22"/><path d="M18,5 L23,3 L23,8 L16,8 Z" fill="#c8cf63"/></svg>
<div class="a" style="left:1871px;top:490px;width:18.5px;height:22px;overflow:hidden"><div class="t" style="left:0;top:0.9px;font-size:17px;color:#1c1c24;transform:scaleX(.93)">tot</div></div>
<svg class="a" style="left:1839px;top:522px" width="24" height="21" viewBox="0 0 24 21">
<path d="M11,10 L17,3 A9.5,9.5 0 0 0 1.5,10 Z" fill="#e47427"/><path d="M1.5,10 A9.5,9.5 0 0 0 20.5,10 Z" fill="#b81e22"/><path d="M18,5 L23,3 L23,8 L16,8 Z" fill="#c8cf63"/></svg>
<div class="a" style="left:1871px;top:519px;width:18.5px;height:22px;overflow:hidden"><div class="t" style="left:0;top:1.4px;font-size:17px;color:#1c1c24;transform:scaleX(.93)">tot</div></div>
<svg class="a" style="left:1839px;top:552px" width="24" height="21" viewBox="0 0 24 21">
<path d="M11,10 L17,3 A9.5,9.5 0 0 0 1.5,10 Z" fill="#e47427"/><path d="M1.5,10 A9.5,9.5 0 0 0 20.5,10 Z" fill="#b81e22"/><path d="M18,5 L23,3 L23,8 L16,8 Z" fill="#c8cf63"/></svg>
<div class="a" style="left:1871px;top:548px;width:18.5px;height:22px;overflow:hidden"><div class="t" style="left:0;top:1.9px;font-size:17px;color:#1c1c24;transform:scaleX(.93)">tot</div></div>
<svg class="a" style="left:1839px;top:581px" width="24" height="21" viewBox="0 0 24 21">
<path d="M11,10 L17,3 A9.5,9.5 0 0 0 1.5,10 Z" fill="#e47427"/><path d="M1.5,10 A9.5,9.5 0 0 0 20.5,10 Z" fill="#b81e22"/><path d="M18,5 L23,3 L23,8 L16,8 Z" fill="#c8cf63"/></svg>
<div class="a" style="left:1871px;top:578px;width:18.5px;height:22px;overflow:hidden"><div class="t" style="left:0;top:1.4px;font-size:17px;color:#1c1c24;transform:scaleX(.93)">tot</div></div>
<svg class="a" style="left:1839px;top:610px" width="24" height="21" viewBox="0 0 24 21">
<path d="M11,10 L17,3 A9.5,9.5 0 0 0 1.5,10 Z" fill="#e47427"/><path d="M1.5,10 A9.5,9.5 0 0 0 20.5,10 Z" fill="#b81e22"/><path d="M18,5 L23,3 L23,8 L16,8 Z" fill="#c8cf63"/></svg>
<div class="a" style="left:1871px;top:608px;width:18.5px;height:22px;overflow:hidden"><div class="t" style="left:0;top:0.9px;font-size:17px;color:#1c1c24;transform:scaleX(.93)">FH</div></div>
<svg class="a" style="left:1839px;top:640px" width="24" height="21" viewBox="0 0 24 21">
<path d="M11,10 L17,3 A9.5,9.5 0 0 0 1.5,10 Z" fill="#e47427"/><path d="M1.5,10 A9.5,9.5 0 0 0 20.5,10 Z" fill="#b81e22"/><path d="M18,5 L23,3 L23,8 L16,8 Z" fill="#c8cf63"/></svg>
<div class="a" style="left:1871px;top:637px;width:18.5px;height:22px;overflow:hidden"><div class="t" style="left:0;top:1.4px;font-size:17px;color:#1c1c24;transform:scaleX(.93)">FH</div></div>
<svg class="a" style="left:1839px;top:670px" width="24" height="21" viewBox="0 0 24 21">
<path d="M11,10 L17,3 A9.5,9.5 0 0 0 1.5,10 Z" fill="#e47427"/><path d="M1.5,10 A9.5,9.5 0 0 0 20.5,10 Z" fill="#b81e22"/><path d="M18,5 L23,3 L23,8 L16,8 Z" fill="#c8cf63"/></svg>
<div class="a" style="left:1871px;top:666px;width:18.5px;height:22px;overflow:hidden"><div class="t" style="left:0;top:1.9px;font-size:17px;color:#1c1c24;transform:scaleX(.93)">FH</div></div>
<svg class="a" style="left:1839px;top:699px" width="24" height="21" viewBox="0 0 24 21">
<path d="M11,10 L17,3 A9.5,9.5 0 0 0 1.5,10 Z" fill="#e47427"/><path d="M1.5,10 A9.5,9.5 0 0 0 20.5,10 Z" fill="#b81e22"/><path d="M18,5 L23,3 L23,8 L16,8 Z" fill="#c8cf63"/></svg>
<div class="a" style="left:1871px;top:696px;width:18.5px;height:22px;overflow:hidden"><div class="t" style="left:0;top:1.4px;font-size:17px;color:#1c1c24;transform:scaleX(.93)">FH</div></div>
<svg class="a" style="left:1839px;top:728px" width="24" height="21" viewBox="0 0 24 21">
<path d="M11,10 L17,3 A9.5,9.5 0 0 0 1.5,10 Z" fill="#e47427"/><path d="M1.5,10 A9.5,9.5 0 0 0 20.5,10 Z" fill="#b81e22"/><path d="M18,5 L23,3 L23,8 L16,8 Z" fill="#c8cf63"/></svg>
<div class="a" style="left:1871px;top:726px;width:18.5px;height:22px;overflow:hidden"><div class="t" style="left:0;top:0.9px;font-size:17px;color:#1c1c24;transform:scaleX(.93)">FH</div></div>
<svg class="a" style="left:1839px;top:758px" width="24" height="21" viewBox="0 0 24 21">
<path d="M11,10 L17,3 A9.5,9.5 0 0 0 1.5,10 Z" fill="#e47427"/><path d="M1.5,10 A9.5,9.5 0 0 0 20.5,10 Z" fill="#b81e22"/><path d="M18,5 L23,3 L23,8 L16,8 Z" fill="#c8cf63"/></svg>
<div class="a" style="left:1871px;top:755px;width:18.5px;height:22px;overflow:hidden"><div class="t" style="left:0;top:1.4px;font-size:17px;color:#1c1c24;transform:scaleX(.93)">FH</div></div>
<svg class="a" style="left:1839px;top:788px" width="24" height="21" viewBox="0 0 24 21">
<path d="M11,10 L17,3 A9.5,9.5 0 0 0 1.5,10 Z" fill="#e47427"/><path d="M1.5,10 A9.5,9.5 0 0 0 20.5,10 Z" fill="#b81e22"/><path d="M18,5 L23,3 L23,8 L16,8 Z" fill="#c8cf63"/></svg>
<div class="a" style="left:1871px;top:784px;width:18.5px;height:22px;overflow:hidden"><div class="t" style="left:0;top:1.9px;font-size:17px;color:#1c1c24;transform:scaleX(.93)">TU</div></div>
<svg class="a" style="left:1839px;top:817px" width="24" height="21" viewBox="0 0 24 21">
<path d="M11,10 L17,3 A9.5,9.5 0 0 0 1.5,10 Z" fill="#e47427"/><path d="M1.5,10 A9.5,9.5 0 0 0 20.5,10 Z" fill="#b81e22"/><path d="M18,5 L23,3 L23,8 L16,8 Z" fill="#c8cf63"/></svg>
<div class="a" style="left:1871px;top:814px;width:18.5px;height:22px;overflow:hidden"><div class="t" style="left:0;top:1.4px;font-size:17px;color:#1c1c24;transform:scaleX(.93)">mi</div></div>
<svg class="a" style="left:1839px;top:846px" width="24" height="21" viewBox="0 0 24 21">
<path d="M11,10 L17,3 A9.5,9.5 0 0 0 1.5,10 Z" fill="#e47427"/><path d="M1.5,10 A9.5,9.5 0 0 0 20.5,10 Z" fill="#b81e22"/><path d="M18,5 L23,3 L23,8 L16,8 Z" fill="#c8cf63"/></svg>
<div class="a" style="left:1871px;top:844px;width:18.5px;height:22px;overflow:hidden"><div class="t" style="left:0;top:0.9px;font-size:17px;color:#1c1c24;transform:scaleX(.93)">ofl</div></div>
<div class="a" style="left:1806px;top:876px;width:86px;height:10px;overflow:hidden"><svg style="position:absolute;left:33px;top:0" width="24" height="21" viewBox="0 0 24 21">
<path d="M11,10 L17,3 A9.5,9.5 0 0 0 1.5,10 Z" fill="#e47427"/><path d="M1.5,10 A9.5,9.5 0 0 0 20.5,10 Z" fill="#b81e22"/><path d="M18,5 L23,3 L23,8 L16,8 Z" fill="#c8cf63"/></svg><div class="t" style="left:65px;top:-1.4px;font-size:17px;color:#1c1c24;transform:scaleX(.93)">tal</div></div>
<div class="a" style="left:1806px;top:306px;width:85px;height:600px;overflow:hidden"></div>
<div class="a" style="left:1892px;top:332px;width:16px;height:491px;background:#b9b9b9"></div>
<svg class="a" style="left:1893px;top:315px" width="15" height="9" viewBox="0 0 15 9"><path d="M1,8 L14,8 L7.5,1 Z" fill="#333"/></svg>
<svg class="a" style="left:1893px;top:869px" width="15" height="9" viewBox="0 0 15 9"><path d="M1,1 L14,1 L7.5,8 Z" fill="#333"/></svg>
<svg class="a" style="left:1813px;top:888px" width="72" height="17" viewBox="0 0 72 17"><path d="M10,2 L2,8.5 L10,15 Z M61,2 L69,8.5 L61,15 Z" fill="#2a2a2a"/><rect x="18" y="0" width="11" height="16" fill="#bdbdbd"/></svg>
<div class="a" style="left:1799px;top:915px;width:52px;height:27px;background:linear-gradient(#f0f0f0,#d9d9d9);border:1px solid #a9a9a9;border-top:none"></div>
<div class="t" style="left:1808.56px;top:920.78px;font-size:17px;color:#1c1c24;transform:scaleX(0.9421)">Un...</div>
<div class="a" style="left:1850px;top:914px;width:50px;height:31px;background:#fff;border:1px solid #a9a9a9;border-top:none"></div>
<div class="t" style="left:1860.0px;top:922.18px;font-size:17px;color:#1c1c24;transform:scaleX(0.94)">All...</div>

<!-- COMMUNICATION BAR -->
<div class="a" style="left:3px;top:949px;width:156px;height:30px;background:#fff;border:1px solid #a9a9a9"></div>
<div class="t" style="left:7.4px;top:956.31px;font-size:16.5px;color:#1c1c24;transform:scaleX(1.0062)">Communication Bar</div>

<svg class="a" style="left:0;top:0" width="1920" height="1020" viewBox="0 0 1920 1020" font-family="Liberation Sans">
<defs><clipPath id="pc"><rect x="190.5" y="434.5" width="1342.0" height="361.5"/></clipPath></defs>
<rect x="190.5" y="434.5" width="1342.0" height="361.5" fill="none" stroke="#1a1a1a" stroke-width="1.6"/>
<path d="M184.5,770.6 H190.5 M180.5,739.8 H190.5 M184.5,709.0 H190.5 M184.5,678.2 H190.5 M184.5,647.4 H190.5 M184.5,616.6 H190.5 M180.5,585.9 H190.5 M184.5,555.1 H190.5 M184.5,524.3 H190.5 M184.5,493.5 H190.5 M184.5,462.7 H190.5 M192.7,796 V801 M217.6,796 V801 M242.6,796 V805 M267.6,796 V801 M292.5,796 V801 M317.5,796 V801 M342.4,796 V801 M367.4,796 V805 M392.4,796 V801 M417.3,796 V801 M442.3,796 V801 M467.2,796 V801 M492.2,796 V805 M517.2,796 V801 M542.1,796 V801 M567.1,796 V801 M592.0,796 V801 M617.0,796 V805 M642.0,796 V801 M666.9,796 V801 M691.9,796 V801 M716.8,796 V801 M741.8,796 V805 M766.8,796 V801 M791.7,796 V801 M816.7,796 V801 M841.6,796 V801 M866.6,796 V805 M891.6,796 V801 M916.5,796 V801 M941.5,796 V801 M966.4,796 V801 M991.4,796 V805 M1016.4,796 V801 M1041.3,796 V801 M1066.3,796 V801 M1091.2,796 V801 M1116.2,796 V805 M1141.2,796 V801 M1166.1,796 V801 M1191.1,796 V801 M1216.0,796 V801 M1241.0,796 V805 M1266.0,796 V801 M1290.9,796 V801 M1315.9,796 V801 M1340.8,796 V801 M1365.8,796 V805 M1390.8,796 V801 M1415.7,796 V801 M1440.7,796 V801 M1465.6,796 V801 M1490.6,796 V805 M1515.6,796 V801" stroke="#1a1a1a" stroke-width="1.6" fill="none"/>
<text x="241.9" y="831.7" font-size="19.5" text-anchor="middle" fill="#222">1200</text>
<text x="366.7" y="831.7" font-size="19.5" text-anchor="middle" fill="#222">1400</text>
<text x="491.5" y="831.7" font-size="19.5" text-anchor="middle" fill="#222">1600</text>
<text x="616.3" y="831.7" font-size="19.5" text-anchor="middle" fill="#222">1800</text>
<text x="741.1" y="831.7" font-size="19.5" text-anchor="middle" fill="#222">2000</text>
<text x="865.9" y="831.7" font-size="19.5" text-anchor="middle" fill="#222">2200</text>
<text x="990.7" y="831.7" font-size="19.5" text-anchor="middle" fill="#222">2400</text>
<text x="1115.5" y="831.7" font-size="19.5" text-anchor="middle" fill="#222">2600</text>
<text x="1240.3" y="831.7" font-size="19.5" text-anchor="middle" fill="#222">2800</text>
<text x="1365.1" y="831.7" font-size="19.5" text-anchor="middle" fill="#222">3000</text>
<text x="1489.9" y="831.7" font-size="19.5" text-anchor="middle" fill="#222">3200</text>
<text x="174.6" y="747" font-size="19" text-anchor="end" fill="#222">1,5</text>
<text x="173.7" y="592.5" font-size="19" text-anchor="end" fill="#222">2</text>
<text x="861.3" y="858.5" font-size="19.5" text-anchor="middle" fill="#222" transform="translate(861.3,0) scale(1.07,1) translate(-861.3,0)">Q1 [m^3/h]</text>
<text transform="translate(141.4,614.5) rotate(-90)" font-size="19" text-anchor="middle" fill="#222">P2 [bar a]</text>
<g clip-path="url(#pc)">
<path d="M202.0,741.3 C214.1,742.0 250.3,744.0 274.5,745.5 C298.7,747.0 322.8,748.1 347.0,750.0 C371.2,751.9 395.3,753.9 419.5,756.8 C443.7,759.7 467.8,763.5 492.0,767.5 C516.2,771.5 540.3,776.7 564.5,780.5 C588.7,784.3 624.9,788.8 637.0,790.5" stroke="#c23540" stroke-width="1.5" fill="none"/>
<circle cx="202.0" cy="741.3" r="8.0" fill="#e8141c"/>
<circle cx="274.5" cy="745.5" r="8.0" fill="#e8141c"/>
<circle cx="347.0" cy="750.0" r="8.0" fill="#e8141c"/>
<circle cx="419.5" cy="756.8" r="8.0" fill="#e8141c"/>
<circle cx="492.0" cy="767.5" r="8.0" fill="#e8141c"/>
<circle cx="564.5" cy="780.5" r="8.0" fill="#e8141c"/>
<circle cx="637.0" cy="790.5" r="8.0" fill="#e8141c"/>
<path d="M310.0,678.0 C325.9,679.0 373.4,681.3 405.1,683.8 C436.8,686.3 468.5,688.6 500.2,693.0 C531.9,697.4 563.6,704.4 595.3,710.0 C627.0,715.6 658.7,721.1 690.4,726.7 C722.1,732.3 753.8,737.6 785.5,743.7 C817.2,749.8 864.7,760.0 880.6,763.3" stroke="#c23540" stroke-width="1.5" fill="none"/>
<rect x="302.4" y="670.4" width="15.2" height="15.2" fill="#e8141c"/>
<rect x="397.5" y="676.2" width="15.2" height="15.2" fill="#e8141c"/>
<rect x="492.6" y="685.4" width="15.2" height="15.2" fill="#e8141c"/>
<rect x="587.7" y="702.4" width="15.2" height="15.2" fill="#e8141c"/>
<rect x="682.8" y="719.1" width="15.2" height="15.2" fill="#e8141c"/>
<rect x="777.9" y="736.1" width="15.2" height="15.2" fill="#e8141c"/>
<rect x="873.0" y="755.7" width="15.2" height="15.2" fill="#e8141c"/>
<path d="M421.3,599.0 C440.9,600.6 499.8,605.0 539.0,608.4 C578.3,611.8 617.5,614.6 656.8,619.2 C696.0,623.8 735.3,629.1 774.5,635.9 C813.8,642.6 853.0,650.4 892.3,659.7 C931.5,669.1 970.8,680.6 1010.0,692.0 C1049.3,703.4 1108.2,722.0 1127.8,728.0" stroke="#c23540" stroke-width="1.5" fill="none"/>
<path d="M421.3,590.4 L429.9,599.0 L421.3,607.6 L412.7,599.0 Z" fill="#e8141c"/>
<path d="M539.0,599.8 L547.6,608.4 L539.0,617.0 L530.4,608.4 Z" fill="#e8141c"/>
<path d="M656.8,610.6 L665.4,619.2 L656.8,627.8 L648.2,619.2 Z" fill="#e8141c"/>
<path d="M774.5,627.3 L783.1,635.9 L774.5,644.5 L765.9,635.9 Z" fill="#e8141c"/>
<path d="M892.3,651.1 L900.9,659.7 L892.3,668.3 L883.7,659.7 Z" fill="#e8141c"/>
<path d="M1010.0,683.4 L1018.6,692.0 L1010.0,700.6 L1001.4,692.0 Z" fill="#e8141c"/>
<path d="M1127.8,719.4 L1136.4,728.0 L1127.8,736.6 L1119.2,728.0 Z" fill="#e8141c"/>
<path d="M557.8,505.8 C580.8,507.0 650.0,509.3 696.0,513.0 C742.1,516.7 788.2,521.2 834.3,528.0 C880.4,534.8 926.5,544.0 972.5,553.8 C1018.6,563.5 1064.7,573.7 1110.8,586.5 C1156.9,599.3 1203.0,613.0 1249.0,630.5 C1295.1,648.0 1364.3,681.6 1387.3,691.8" stroke="#c23540" stroke-width="1.5" fill="none"/>
<path d="M550.0,511.3 L565.6,511.3 L557.8,497.8 Z" fill="#e8141c"/>
<path d="M688.2,518.5 L703.8,518.5 L696.0,505.0 Z" fill="#e8141c"/>
<path d="M826.5,533.5 L842.1,533.5 L834.3,520.0 Z" fill="#e8141c"/>
<path d="M964.8,559.3 L980.3,559.3 L972.5,545.7 Z" fill="#e8141c"/>
<path d="M1103.0,592.0 L1118.6,592.0 L1110.8,578.5 Z" fill="#e8141c"/>
<path d="M1241.2,636.0 L1256.8,636.0 L1249.0,622.5 Z" fill="#e8141c"/>
<path d="M1379.5,697.3 L1395.1,697.3 L1387.3,683.8 Z" fill="#e8141c"/>
<path d="M624.4,438.0 C649.2,440.5 723.8,447.1 773.5,453.0 C823.2,458.9 872.9,465.2 922.5,473.4 C972.2,481.6 1021.9,490.9 1071.6,502.3 C1121.3,513.7 1171.0,526.7 1220.7,541.6 C1270.4,556.5 1320.1,570.9 1369.8,591.8 C1419.4,612.7 1494.0,654.5 1518.8,667.0" stroke="#c23540" stroke-width="1.5" fill="none"/>
<path d="M616.8,430.4 L632.0,445.6 M632.0,430.4 L616.8,445.6" stroke="#d8333b" stroke-width="1.35" fill="none"/>
<path d="M765.9,445.4 L781.1,460.6 M781.1,445.4 L765.9,460.6" stroke="#d8333b" stroke-width="1.35" fill="none"/>
<path d="M914.9,465.8 L930.1,481.0 M930.1,465.8 L914.9,481.0" stroke="#d8333b" stroke-width="1.35" fill="none"/>
<path d="M1064.0,494.7 L1079.2,509.9 M1079.2,494.7 L1064.0,509.9" stroke="#d8333b" stroke-width="1.35" fill="none"/>
<path d="M1213.1,534.0 L1228.3,549.2 M1228.3,534.0 L1213.1,549.2" stroke="#d8333b" stroke-width="1.35" fill="none"/>
<path d="M1362.2,584.2 L1377.3,599.4 M1377.3,584.2 L1362.2,599.4" stroke="#d8333b" stroke-width="1.35" fill="none"/>
<path d="M1511.2,659.4 L1526.4,674.6 M1526.4,659.4 L1511.2,674.6" stroke="#d8333b" stroke-width="1.35" fill="none"/>
</g>
<path d="M1447.5,677.6 H1470" stroke="#c23540" stroke-width="1.5"/>
<circle cx="1458.8" cy="677.6" r="7.6" fill="#e8141c"/>
<text x="1474.4" y="684.1" font-size="17" fill="#1c1c24" transform="translate(1474.4,0) scale(0.9,1) translate(-1474.4,0)">1848</text>
<path d="M1447.5,698.7 H1470" stroke="#c23540" stroke-width="1.5"/>
<rect x="1451.6" y="691.5" width="14.4" height="14.4" fill="#e8141c"/>
<text x="1474.4" y="705.2" font-size="17" fill="#1c1c24" transform="translate(1474.4,0) scale(0.9,1) translate(-1474.4,0)">2113</text>
<path d="M1447.5,719.8 H1470" stroke="#c23540" stroke-width="1.5"/>
<path d="M1458.8,711.6 L1467.0,719.8 L1458.8,728.0 L1450.6,719.8 Z" fill="#e8141c"/>
<text x="1474.4" y="726.3" font-size="17" fill="#1c1c24" transform="translate(1474.4,0) scale(0.9,1) translate(-1474.4,0)">2378</text>
<path d="M1447.5,740.9 H1470" stroke="#c23540" stroke-width="1.5"/>
<path d="M1451.4,746.2 L1466.2,746.2 L1458.8,733.3 Z" fill="#e8141c"/>
<text x="1474.4" y="747.4" font-size="17" fill="#1c1c24" transform="translate(1474.4,0) scale(0.9,1) translate(-1474.4,0)">2636</text>
<path d="M1447.5,762.0 H1470" stroke="#c23540" stroke-width="1.5"/>
<path d="M1451.6,754.8 L1466.0,769.2 M1466.0,754.8 L1451.6,769.2" stroke="#d8333b" stroke-width="1.35" fill="none"/>
<text x="1474.4" y="768.5" font-size="17" fill="#1c1c24" transform="translate(1474.4,0) scale(0.9,1) translate(-1474.4,0)">2770</text>
</svg>
<div id="status" class="a"></div>
<div class="t" style="left:11.57px;top:999.61px;font-size:16.5px;color:#eaf3fb;transform:scaleX(0.9295)">Ready</div>
</body></html>
